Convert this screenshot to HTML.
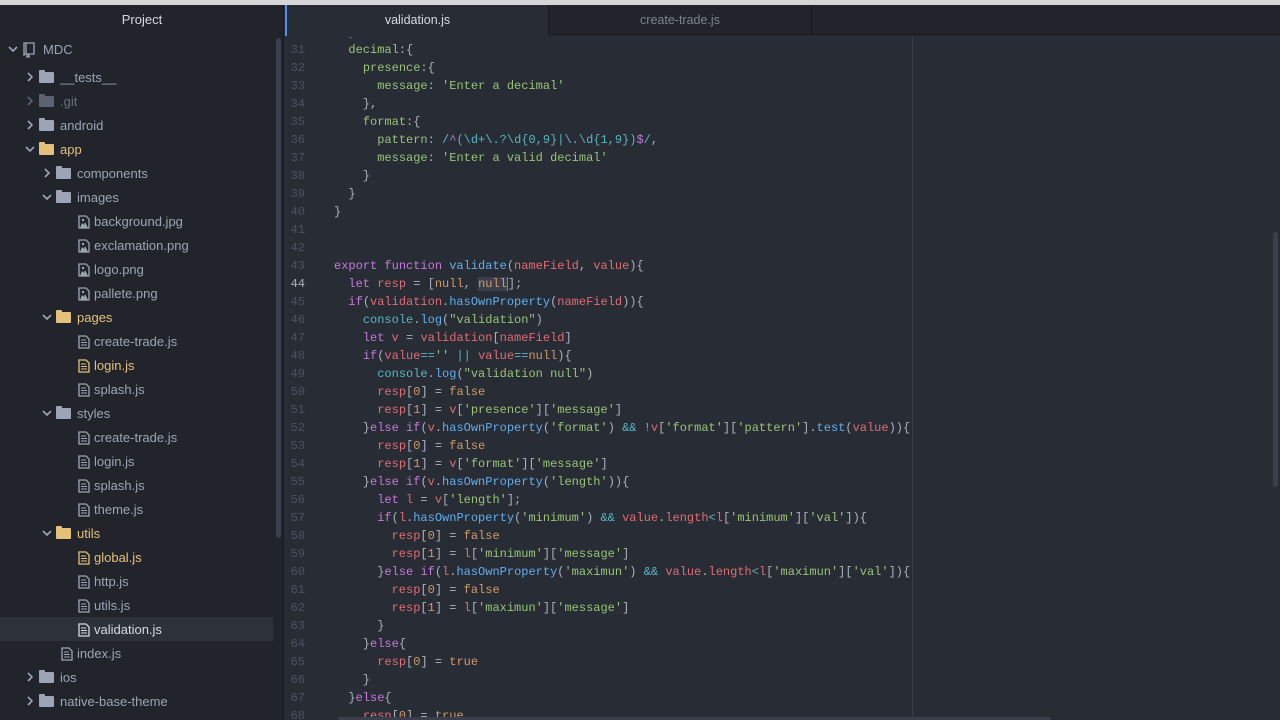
<!DOCTYPE html>
<html><head><meta charset="utf-8">
<style>
*{margin:0;padding:0;box-sizing:border-box}
body{width:1280px;height:720px;overflow:hidden;background:#282c34;font-family:"Liberation Sans",sans-serif;position:relative}
.top{position:absolute;left:0;top:0;width:1280px;height:5px;background:#d6d6d6}
.side{position:absolute;left:0;top:5px;width:284px;height:715px;background:#21252b;border-right:1px solid #181a1f}
.ptitle{position:absolute;left:0;top:0;width:284px;height:30px;line-height:30px;text-align:center;color:#d7dae0;font-size:13px}
.row{position:absolute;left:0;height:24px;width:273px;line-height:25px;font-size:13px;color:#9da5b4;white-space:nowrap}
.row.sel{background:#2c313a;color:#d7dae0}
.row .t{position:absolute;top:0}
.chev{position:absolute;top:0;width:10px;height:24px}
.fold{position:absolute;top:7px;width:15px;height:11px;background:#9da5b4;border-radius:1px}
.fold:before{content:"";position:absolute;left:0;top:-2px;width:6px;height:3px;background:inherit;border-radius:1px 1px 0 0}
.file{position:absolute;top:6px}
.tan{color:#e5c07b}.tan .fold{background:#e5c07b}
.dim{color:#6b717d}.dim .fold{background:#5c6370}
.sscroll{position:absolute;left:276px;top:33px;width:5px;height:500px;background:#3a3f4b;border-radius:3px}
.tabs{position:absolute;left:285px;top:5px;width:995px;height:30px;background:#21252b;border-bottom:1px solid #181a1f}
.tab{position:absolute;top:0;height:30px;line-height:31px;text-align:center;font-size:12.5px;color:#7f848e}
.tab.act{background:#282c34;color:#d7dae0;border-left:2px solid #568af2;height:31px}
.ed{position:absolute;left:285px;top:37px;width:995px;height:683px;background:#282c34;overflow:hidden}
.ln{position:absolute;left:0;width:20px;text-align:right;color:#4b5263;font:12px/18px "Liberation Mono",monospace}
.cd{position:absolute;left:49px;white-space:pre;color:#abb2bf;font:12px/18px "Liberation Mono",monospace}
.guide{position:absolute;left:627px;top:-2px;width:1px;height:685px;background:#3b4048}
.k{color:#c678dd}.f{color:#61afef}.v{color:#e06c75}.s{color:#98c379}.n{color:#d19a66}.c{color:#56b6c2}
.escroll{position:absolute;left:1273px;top:232px;width:5px;height:255px;background:#3a3f4b;border-radius:3px}
.hscroll{position:absolute;left:338px;top:717px;width:712px;height:3px;background:#3a3f4b}
</style></head><body>
<div class="top"></div>
<div class="side">
<div class="ptitle">Project</div>
<div class="sscroll"></div>
</div>
<div id="tree"></div>
<div class="tabs">
<div class="tab act" style="left:0;width:263px">validation.js</div>
<div class="tab" style="left:263px;width:264px;border-left:1px solid #181a1f;border-right:1px solid #181a1f;height:29px">create-trade.js</div>
</div>
<div class="ed">
<div class="guide"></div>
<div class="ln" style="top:-14px">30</div><div class="cd" style="top:-14px">  },</div>
<div class="ln" style="top:4px">31</div><div class="cd" style="top:4px">  <span class="s">decimal</span>:{</div>
<div class="ln" style="top:22px">32</div><div class="cd" style="top:22px">    <span class="s">presence</span>:{</div>
<div class="ln" style="top:40px">33</div><div class="cd" style="top:40px">      <span class="s">message</span>: <span class="s">'Enter a decimal'</span></div>
<div class="ln" style="top:58px">34</div><div class="cd" style="top:58px">    },</div>
<div class="ln" style="top:76px">35</div><div class="cd" style="top:76px">    <span class="s">format</span>:{</div>
<div class="ln" style="top:94px">36</div><div class="cd" style="top:94px">      <span class="s">pattern</span>: <span class="c">/</span><span class="k">^</span><span class="c">(\d+\.?\d{0,9}|\.\d{1,9})</span><span class="k">$</span><span class="c">/</span>,</div>
<div class="ln" style="top:112px">37</div><div class="cd" style="top:112px">      <span class="s">message</span>: <span class="s">'Enter a valid decimal'</span></div>
<div class="ln" style="top:130px">38</div><div class="cd" style="top:130px">    }</div>
<div class="ln" style="top:148px">39</div><div class="cd" style="top:148px">  }</div>
<div class="ln" style="top:166px">40</div><div class="cd" style="top:166px">}</div>
<div class="ln" style="top:184px">41</div>
<div class="ln" style="top:202px">42</div>
<div class="ln" style="top:220px">43</div><div class="cd" style="top:220px"><span class="k">export</span> <span class="k">function</span> <span class="f">validate</span>(<span class="v">nameField</span>, <span class="v">value</span>){</div>
<div class="ln" style="top:238px;color:#abb2bf">44</div><div class="cd" style="top:238px">  <span class="k">let</span> <span class="v">resp</span> = [<span class="n">null</span>, <span class="n" style="background:#3a3f4b">null</span><span style="border-left:1px solid #528bff">]</span>;</div>
<div class="ln" style="top:256px">45</div><div class="cd" style="top:256px">  <span class="k">if</span>(<span class="v">validation</span>.<span class="f">hasOwnProperty</span>(<span class="v">nameField</span>)){</div>
<div class="ln" style="top:274px">46</div><div class="cd" style="top:274px">    <span class="c">console</span>.<span class="f">log</span>(<span class="s">"validation"</span>)</div>
<div class="ln" style="top:292px">47</div><div class="cd" style="top:292px">    <span class="k">let</span> <span class="v">v</span> = <span class="v">validation</span>[<span class="v">nameField</span>]</div>
<div class="ln" style="top:310px">48</div><div class="cd" style="top:310px">    <span class="k">if</span>(<span class="v">value</span><span class="c">==</span><span class="s">''</span> <span class="c">||</span> <span class="v">value</span><span class="c">==</span><span class="n">null</span>){</div>
<div class="ln" style="top:328px">49</div><div class="cd" style="top:328px">      <span class="c">console</span>.<span class="f">log</span>(<span class="s">"validation null"</span>)</div>
<div class="ln" style="top:346px">50</div><div class="cd" style="top:346px">      <span class="v">resp</span>[<span class="n">0</span>] = <span class="n">false</span></div>
<div class="ln" style="top:364px">51</div><div class="cd" style="top:364px">      <span class="v">resp</span>[<span class="n">1</span>] = <span class="v">v</span>[<span class="s">'presence'</span>][<span class="s">'message'</span>]</div>
<div class="ln" style="top:382px">52</div><div class="cd" style="top:382px">    }<span class="k">else</span> <span class="k">if</span>(<span class="v">v</span>.<span class="f">hasOwnProperty</span>(<span class="s">'format'</span>) <span class="c">&amp;&amp;</span> <span class="c">!</span><span class="v">v</span>[<span class="s">'format'</span>][<span class="s">'pattern'</span>].<span class="f">test</span>(<span class="v">value</span>)){</div>
<div class="ln" style="top:400px">53</div><div class="cd" style="top:400px">      <span class="v">resp</span>[<span class="n">0</span>] = <span class="n">false</span></div>
<div class="ln" style="top:418px">54</div><div class="cd" style="top:418px">      <span class="v">resp</span>[<span class="n">1</span>] = <span class="v">v</span>[<span class="s">'format'</span>][<span class="s">'message'</span>]</div>
<div class="ln" style="top:436px">55</div><div class="cd" style="top:436px">    }<span class="k">else</span> <span class="k">if</span>(<span class="v">v</span>.<span class="f">hasOwnProperty</span>(<span class="s">'length'</span>)){</div>
<div class="ln" style="top:454px">56</div><div class="cd" style="top:454px">      <span class="k">let</span> <span class="v">l</span> = <span class="v">v</span>[<span class="s">'length'</span>];</div>
<div class="ln" style="top:472px">57</div><div class="cd" style="top:472px">      <span class="k">if</span>(<span class="v">l</span>.<span class="f">hasOwnProperty</span>(<span class="s">'minimum'</span>) <span class="c">&amp;&amp;</span> <span class="v">value</span>.<span class="v">length</span><span class="c">&lt;</span><span class="v">l</span>[<span class="s">'minimum'</span>][<span class="s">'val'</span>]){</div>
<div class="ln" style="top:490px">58</div><div class="cd" style="top:490px">        <span class="v">resp</span>[<span class="n">0</span>] = <span class="n">false</span></div>
<div class="ln" style="top:508px">59</div><div class="cd" style="top:508px">        <span class="v">resp</span>[<span class="n">1</span>] = <span class="v">l</span>[<span class="s">'minimum'</span>][<span class="s">'message'</span>]</div>
<div class="ln" style="top:526px">60</div><div class="cd" style="top:526px">      }<span class="k">else</span> <span class="k">if</span>(<span class="v">l</span>.<span class="f">hasOwnProperty</span>(<span class="s">'maximun'</span>) <span class="c">&amp;&amp;</span> <span class="v">value</span>.<span class="v">length</span><span class="c">&lt;</span><span class="v">l</span>[<span class="s">'maximun'</span>][<span class="s">'val'</span>]){</div>
<div class="ln" style="top:544px">61</div><div class="cd" style="top:544px">        <span class="v">resp</span>[<span class="n">0</span>] = <span class="n">false</span></div>
<div class="ln" style="top:562px">62</div><div class="cd" style="top:562px">        <span class="v">resp</span>[<span class="n">1</span>] = <span class="v">l</span>[<span class="s">'maximun'</span>][<span class="s">'message'</span>]</div>
<div class="ln" style="top:580px">63</div><div class="cd" style="top:580px">      }</div>
<div class="ln" style="top:598px">64</div><div class="cd" style="top:598px">    }<span class="k">else</span>{</div>
<div class="ln" style="top:616px">65</div><div class="cd" style="top:616px">      <span class="v">resp</span>[<span class="n">0</span>] = <span class="n">true</span></div>
<div class="ln" style="top:634px">66</div><div class="cd" style="top:634px">    }</div>
<div class="ln" style="top:652px">67</div><div class="cd" style="top:652px">  }<span class="k">else</span>{</div>
<div class="ln" style="top:670px">68</div><div class="cd" style="top:670px">    <span class="v">resp</span>[<span class="n">0</span>] = <span class="n">true</span></div>
</div>
<div class="escroll"></div>
<div class="hscroll"></div>
<script>
var items=[
[49,0,'repo','MDC','open',''],
[77,1,'fold','__tests__','closed',''],
[101,1,'fold','.git','closed','dim'],
[125,1,'fold','android','closed',''],
[149,1,'fold','app','open','tan'],
[173,2,'fold','components','closed',''],
[197,2,'fold','images','open',''],
[221,3,'img','background.jpg','',''],
[245,3,'img','exclamation.png','',''],
[269,3,'img','logo.png','',''],
[293,3,'img','pallete.png','',''],
[317,2,'fold','pages','open','tan'],
[341,3,'file','create-trade.js','',''],
[365,3,'file','login.js','','tan'],
[389,3,'file','splash.js','',''],
[413,2,'fold','styles','open',''],
[437,3,'file','create-trade.js','',''],
[461,3,'file','login.js','',''],
[485,3,'file','splash.js','',''],
[509,3,'file','theme.js','',''],
[533,2,'fold','utils','open','tan'],
[557,3,'file','global.js','','tan'],
[581,3,'file','http.js','',''],
[605,3,'file','utils.js','',''],
[629,3,'file','validation.js','','sel'],
[653,2,'file','index.js','',''],
[677,1,'fold','ios','closed',''],
[701,1,'fold','native-base-theme','closed','']];
var h='';
items.forEach(function(it){
 var y=it[0]-12,l=it[1],typ=it[2],cls=it[5];
 var tx=[43,60,77,94][l];
 var ix=tx-21;
 var col=cls=='tan'?'#e5c07b':(cls=='sel'?'#d7dae0':(cls=='dim'?'#5c6370':'#9da5b4'));
 var r='<div class="row '+cls+'" style="top:'+y+'px">';
 if(it[4]){
  var cx=tx-35;
  var d=it[4]=='open'?'M1 10 L5 14 L9 10':'M3 8 L7 12 L3 16';
  r+='<svg class="chev" style="left:'+cx+'px" viewBox="0 0 10 24"><path d="'+d+'" fill="none" stroke="'+(cls=='dim'?'#5c6370':'#9da5b4')+'" stroke-width="1.6"/></svg>';
 }
 if(typ=='fold'){r+='<div class="fold" style="left:'+ix+'px"></div>';}
 else if(typ=='repo'){r+='<svg class="file" style="left:'+(ix)+'px;top:5px" width="14" height="16" viewBox="0 0 14 16"><path d="M2 1h10v11H2zM4 1v11M2 12v2M5 12v3l1-1 1 1v-3" fill="none" stroke="#9da5b4" stroke-width="1.3"/></svg>';}
 else if(typ=='img'){r+='<svg class="file" style="left:'+(ix+5)+'px" width="12" height="14" viewBox="0 0 12 14"><path d="M1 1h7l3 3v9H1z" fill="none" stroke="'+col+'" stroke-width="1.3"/><path d="M2 13l2-5 2 2 1-3 3 6z" fill="'+col+'"/><circle cx="5" cy="5" r="1.2" fill="'+col+'"/></svg>';}
 else {r+='<svg class="file" style="left:'+(ix+5)+'px" width="12" height="14" viewBox="0 0 12 14"><path d="M1 1h7l3 3v9H1z" fill="none" stroke="'+col+'" stroke-width="1.3"/><path d="M3 5h5M3 7.5h6M3 10h6" stroke="'+col+'" stroke-width="1.1"/></svg>';}
 r+='<span class="t" style="left:'+tx+'px">'+it[3]+'</span></div>';
 h+=r;
});
document.getElementById('tree').innerHTML=h;
</script>
</body></html>
